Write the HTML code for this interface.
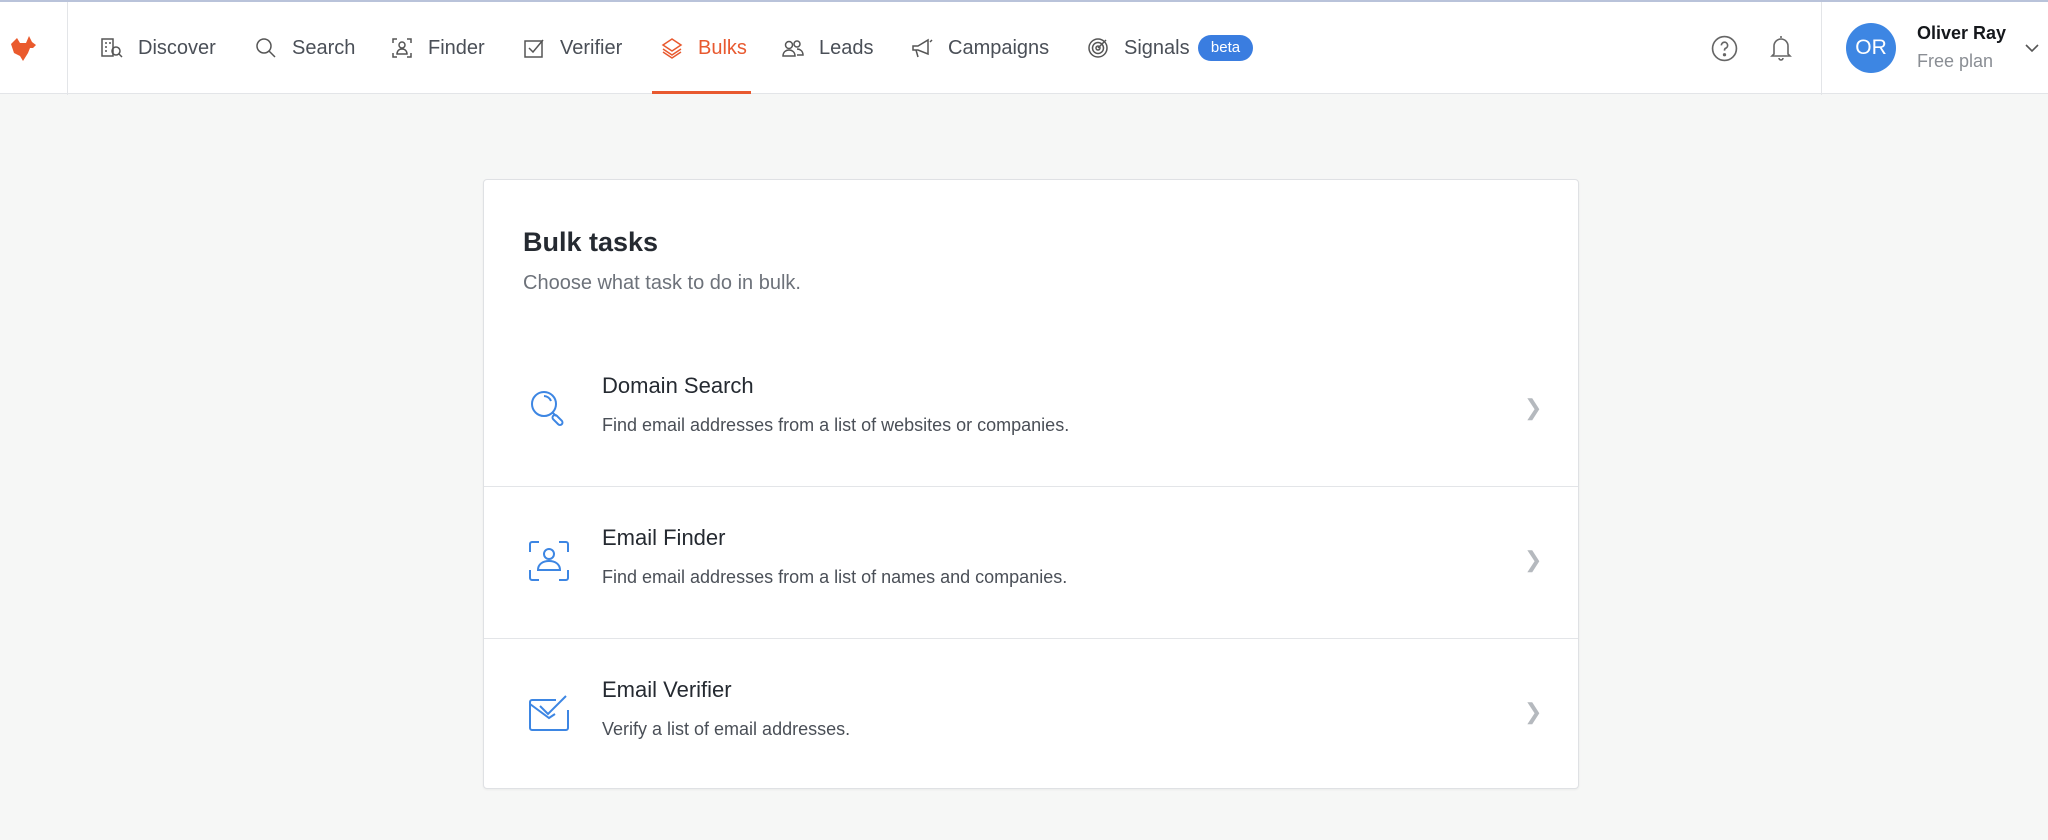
<!DOCTYPE html>
<html><head><meta charset="utf-8"><style>
*{box-sizing:border-box;margin:0;padding:0}
body{width:2048px;height:840px;background:#f6f7f6;font-family:"Liberation Sans",sans-serif;color:#1f2329;position:relative;overflow:hidden}
.nav{position:absolute;left:0;top:0;width:2048px;height:94px;background:#fff;border-top:2px solid #b9c3da;border-bottom:1px solid #e3e5e8}
.vd{position:absolute;top:0;width:1px;height:93px;background:#e3e5e8}
.it{position:absolute;top:0;height:92px;display:flex;align-items:center;font-size:20px;color:#4a4f57}
.it svg{margin-right:14px}
.beta{position:absolute;left:1198px;top:33px;width:55px;height:26px;border-radius:13px;background:#3a7de0;color:#fff;font-size:15px;text-align:center;line-height:26px}
.ul{position:absolute;left:652px;top:89px;width:99px;height:3px;background:#e8592f}
.card{position:absolute;left:483px;top:179px;width:1096px;height:610px;background:#fff;border:1px solid #dfe1e4;border-radius:4px;box-shadow:0 1px 2px rgba(0,0,0,.05)}
.t{position:absolute;left:39px;top:47px;font-size:27px;font-weight:bold;color:#252a31}
.s{position:absolute;left:39px;top:92px;font-size:20px;color:#6d727a}
.row{position:absolute;left:0;width:1094px;height:151px}
.row .h{position:absolute;left:118px;top:38px;font-size:22px;color:#252a31}
.row .d{position:absolute;left:118px;top:80px;font-size:18px;color:#4a4f57}
.row .ic{position:absolute;left:44px;top:53px}
.row .ch{position:absolute;left:1040px;top:60px;font-size:22px;color:#b5b9be}
.line{position:absolute;left:0;width:1094px;height:1px;background:#e3e5e8}
</style></head><body>
<div class="nav">
 <svg style="position:absolute;left:8px;top:32px" width="30" height="30" viewBox="0 0 30 30"><path d="M3 10 L9 4 L12 9 L18 9 L21 2 L24 8 L28 11 L25 14 L22 14 L20 19 L15 27 L12 22 L6 19 Z" fill="#ea5a2d"/></svg>
 <div class="vd" style="left:67px"></div>
 <div class="it" style="left:100px"><svg width="24" height="24" viewBox="0 0 24 24" fill="none" stroke="#555" stroke-width="1.5"><rect x="2" y="3" width="11" height="17"/><path d="M5 7h2M9 7h2M5 11h2M5 15h2"/><circle cx="16" cy="15" r="4"/><path d="M19 18l3 3"/></svg>Discover</div>
 <div class="it" style="left:254px"><svg width="24" height="24" viewBox="0 0 24 24" fill="none" stroke="#555" stroke-width="1.5"><circle cx="10" cy="10" r="7"/><path d="M15 15l6 6"/></svg>Search</div>
 <div class="it" style="left:390px"><svg width="24" height="24" viewBox="0 0 24 24" fill="none" stroke="#555" stroke-width="1.5"><path d="M3 7V3h4M17 3h4v4M21 17v4h-4M7 21H3v-4"/><circle cx="12" cy="9" r="3"/><path d="M7 18c0-3 2-5 5-5s5 2 5 5z"/></svg>Finder</div>
 <div class="it" style="left:522px"><svg width="24" height="24" viewBox="0 0 24 24" fill="none" stroke="#555" stroke-width="1.5"><rect x="3" y="5" width="17" height="16"/><path d="M7 12l4 4 10-12"/></svg>Verifier</div>
 <div class="it" style="left:660px;color:#e8592f"><svg width="24" height="24" viewBox="0 0 24 24" fill="none" stroke="#e8592f" stroke-width="1.5"><path d="M12 3l9 6-9 6-9-6z"/><path d="M3 13l9 6 9-6"/><path d="M3 16l9 6 9-6"/></svg>Bulks</div>
 <div class="it" style="left:781px"><svg width="24" height="24" viewBox="0 0 24 24" fill="none" stroke="#555" stroke-width="1.5"><circle cx="8" cy="9" r="3.5"/><path d="M2 20c0-4 3-6 6-6s6 2 6 6z"/><circle cx="16" cy="8" r="3"/><path d="M16 13c3 0 6 2 6 6h-6"/></svg>Leads</div>
 <div class="it" style="left:910px"><svg width="24" height="24" viewBox="0 0 24 24" fill="none" stroke="#555" stroke-width="1.5"><path d="M3 10h5l10-6v14L8 14H3z"/><path d="M6 14l2 7"/><path d="M20 6l2-2"/></svg>Campaigns</div>
 <div class="it" style="left:1086px"><svg width="24" height="24" viewBox="0 0 24 24" fill="none" stroke="#555" stroke-width="1.5"><circle cx="12" cy="12" r="9"/><circle cx="12" cy="12" r="5.5"/><circle cx="12" cy="12" r="2"/><path d="M12 12l8-8"/></svg>Signals</div>
 <div class="beta">beta</div>
 <div class="ul"></div>
 <svg style="position:absolute;left:1711px;top:33px" width="27" height="27" viewBox="0 0 26 26" fill="none" stroke="#666" stroke-width="1.6"><circle cx="13" cy="13" r="11.5"/><path d="M10 10a3 3 0 1 1 4 2.8c-1 .4-1 1-1 2.2"/><circle cx="13" cy="19" r=".8" fill="#666"/></svg>
 <svg style="position:absolute;left:1769px;top:32px" width="24" height="28" viewBox="0 0 24 28" fill="none" stroke="#666" stroke-width="1.6"><path d="M12 2v2M5 20V12a7 7 0 0 1 14 0v8l2 2H3z"/><path d="M10 24a2 2 0 0 0 4 0"/></svg>
 <div class="vd" style="left:1821px"></div>
 <div style="position:absolute;left:1846px;top:21px;width:50px;height:50px;border-radius:50%;background:#3d86e3;color:#fff;font-size:21px;line-height:50px;text-align:center">OR</div>
 <div style="position:absolute;left:1917px;top:21px;font-size:18px;font-weight:bold;color:#15181c">Oliver Ray</div>
 <div style="position:absolute;left:1917px;top:49px;font-size:18px;color:#8a8e94">Free plan</div>
 <svg style="position:absolute;left:2024px;top:41px" width="16" height="10" viewBox="0 0 16 10" fill="none" stroke="#555" stroke-width="1.6"><path d="M2 2l6 6 6-6"/></svg>
</div>
<div class="card">
 <div class="t">Bulk tasks</div>
 <div class="s">Choose what task to do in bulk.</div>
 <div class="row" style="top:155px">
  <svg class="ic" width="42" height="42" viewBox="0 0 42 42" fill="none" stroke="#3d86e3" stroke-width="2"><circle cx="16" cy="16" r="12"/><path d="M16 8a8 8 0 0 1 7 5"/><path d="M25 25l3 3"/><rect x="27" y="26" width="5" height="12" rx="2.5" transform="rotate(-45 29.5 32)"/></svg>
  <div class="h">Domain Search</div><div class="d">Find email addresses from a list of websites or companies.</div><div class="ch">❯</div>
 </div>
 <div class="line" style="top:306px"></div>
 <div class="row" style="top:307px">
  <svg class="ic" width="42" height="42" viewBox="0 0 42 42" fill="none" stroke="#3d86e3" stroke-width="2"><path d="M2 12V4a2 2 0 0 1 2-2h7M31 2h7a2 2 0 0 1 2 2v8M40 30v8a2 2 0 0 1-2 2h-7M11 40H4a2 2 0 0 1-2-2v-8"/><circle cx="21" cy="14" r="5"/><path d="M10 30c0-6 5-9 11-9s11 3 11 9z"/></svg>
  <div class="h">Email Finder</div><div class="d">Find email addresses from a list of names and companies.</div><div class="ch">❯</div>
 </div>
 <div class="line" style="top:458px"></div>
 <div class="row" style="top:459px">
  <svg class="ic" width="42" height="42" viewBox="0 0 42 42" fill="none" stroke="#3d86e3" stroke-width="2"><path d="M28 8H4a2 2 0 0 0-2 2v26a2 2 0 0 0 2 2h34a2 2 0 0 0 2-2V18"/><path d="M2 12l19 14 6-4"/><path d="M12 14l8 8L38 4"/></svg>
  <div class="h">Email Verifier</div><div class="d">Verify a list of email addresses.</div><div class="ch">❯</div>
 </div>
</div>
</body></html>
